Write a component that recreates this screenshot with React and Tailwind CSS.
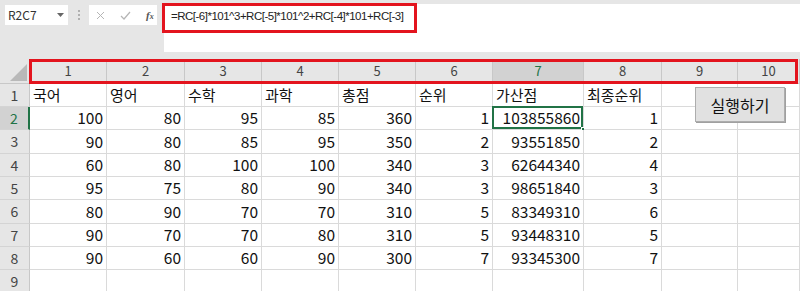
import React from "react";

const COLS = [77, 78, 77, 77, 77, 77, 91, 78, 76, 62];
const ROWH = [23, 23, 24, 23, 23, 24, 23, 23, 23];
const HEAD = ["국어", "영어", "수학", "과학", "총점", "순위", "가산점", "최종순위"];
const DATA = [
  [100, 80, 95, 85, 360, 1, 103855860, 1],
  [90, 80, 85, 95, 350, 2, 93551850, 2],
  [60, 80, 100, 100, 340, 3, 62644340, 4],
  [95, 75, 80, 90, 340, 3, 98651840, 3],
  [80, 90, 70, 70, 310, 5, 83349310, 6],
  [90, 70, 70, 80, 310, 5, 93448310, 5],
  [90, 60, 60, 90, 300, 7, 93345300, 7],
];

const font = { fontFamily: '"Noto Sans CJK KR", "Noto Sans", sans-serif' };

export default function App() {
  const rows = [HEAD, ...DATA, []];
  return (
    <div className="relative w-[800px] h-[291px] overflow-hidden bg-[#e6e6e6]" style={font}>
      {/* toolbar */}
      <div className="flex h-[59px] items-start pt-[4px]">
        <div className="ml-[5px] mt-[1px] flex h-[20px] w-[63px] items-center justify-between bg-white pl-[3px] pr-[4px]">
          <span className="text-[12px] text-[#333]">R2C7</span>
          <svg width="7" height="4" viewBox="0 0 7 4"><path d="M0 0h7L3.5 4z" fill="#666" /></svg>
        </div>
        <div className="ml-[10px] mt-[6px] flex flex-col gap-[2px]">
          <div className="h-[2px] w-[2px] bg-[#b0b0b0]" />
          <div className="h-[2px] w-[2px] bg-[#b0b0b0]" />
          <div className="h-[2px] w-[2px] bg-[#b0b0b0]" />
        </div>
        <div className="ml-[9px] mt-[1px] flex h-[20px] w-[68px] items-center bg-white pl-[6px]">
          <svg width="9" height="9" viewBox="0 0 9 9" className="ml-[1px]"><path d="M1 1l7 7M8 1l-7 7" stroke="#b5b5b5" strokeWidth="1" /></svg>
          <svg width="11" height="9" viewBox="0 0 11 9" className="ml-[15px]"><path d="M1 5l3 3 6-7" stroke="#b5b5b5" strokeWidth="1.2" fill="none" /></svg>
          <span className="ml-[15px] text-[11px] italic font-semibold text-[#555]" style={{ fontFamily: '"Liberation Serif", serif' }}>f<span className="text-[8px]">x</span></span>
        </div>
        <div className="relative ml-[7px] h-[48px] flex-1 bg-white pl-[7px] pt-[4px]">
          <div className="text-[11.5px] leading-[16px] tracking-[-0.5px] text-[#222]" style={{ fontFamily: '"Liberation Sans", Arial, sans-serif' }}>=RC[-6]*101^3+RC[-5]*101^2+RC[-4]*101+RC[-3]</div>
          <div className="absolute left-[-2px] top-[-1px] h-[30px] w-[255px] border-[3px] border-[#e3141e]" />
        </div>
      </div>

      {/* grid */}
      <div className="flex flex-col">
        <div className="flex h-[25px]">
          <div className="relative h-full w-[30px] border-b border-r border-[#c8c8c8] bg-[#e6e6e6]">
            <svg className="absolute left-[10px] top-[5px]" width="17" height="17" viewBox="0 0 17 17"><path d="M17 0V17H0z" fill="#b9b9b9" /></svg>
          </div>
          {COLS.map((w, i) => (
            <div
              key={i}
              style={{ width: w }}
              className={`flex h-full shrink-0 items-center justify-center border-b border-r border-[#c8c8c8] text-[13px] ${i === 6 ? "bg-[#d2d2d2] text-[#217346]" : "bg-[#e6e6e6] text-[#444]"}`}
            >
              {i + 1}
            </div>
          ))}
        </div>
        {rows.map((r, ri) => (
          <div key={ri} className="flex" style={{ height: ROWH[ri] }}>
            <div
              className={`flex h-full w-[30px] shrink-0 items-center justify-center border-b border-[#d4d4d4] text-[14px] ${ri === 1 ? "bg-[#d2d2d2] text-[#217346] border-r-2 border-r-[#217346]" : "bg-[#e6e6e6] text-[#444] border-r border-r-[#c8c8c8]"}`}
            >
              {ri + 1}
            </div>
            {COLS.map((w, ci) => {
              const v = r[ci];
              const sel = ri === 1 && ci === 6;
              return (
                <div
                  key={ci}
                  style={{ width: w }}
                  className={`relative flex h-full shrink-0 items-center border-b border-r border-[#dadada] bg-white text-[#111] ${ri === 0 ? "justify-start pl-[3px] text-[15px]" : "justify-end pr-[3px] text-[15.5px]"}`}
                >
                  {v !== undefined ? v : ""}
                  {sel && (
                    <>
                      <div className="absolute left-[-1px] top-[-1px] h-[calc(100%+1px)] w-[calc(100%+1px)] border-2 border-[#217346]" />
                      <div className="absolute bottom-[-3px] right-[-3px] h-[5px] w-[5px] border border-white bg-[#217346]" />
                    </>
                  )}
                </div>
              );
            })}
          </div>
        ))}
      </div>

      {/* column header annotation */}
      <div className="absolute left-[29px] top-[59px] h-[25px] w-[769px] border-[3px] border-[#e3141e]" />

      {/* button */}
      <div className="absolute left-[695px] top-[87px] flex h-[35px] w-[90px] items-center justify-center border border-[#adadad] bg-[#e1e1e1] text-[16px] text-[#111] shadow-[1px_1px_0_#a0a0a0]">
        실행하기
      </div>
    </div>
  );
}
